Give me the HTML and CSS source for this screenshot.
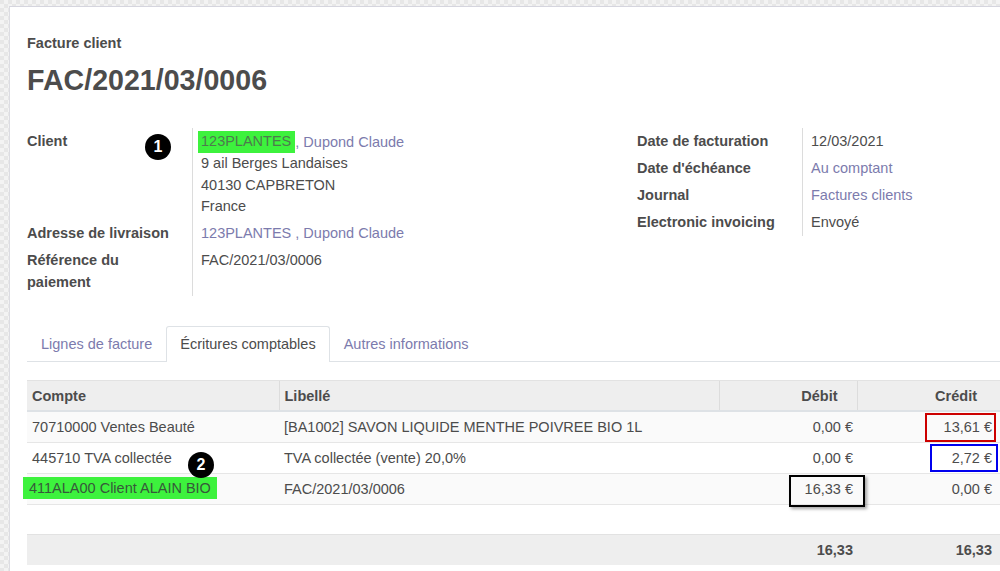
FILE: index.html
```html
<!DOCTYPE html>
<html lang="fr">
<head>
<meta charset="utf-8">
<title>FAC/2021/03/0006</title>
<link rel="stylesheet" href="styles.css">
</head>
<body>
<div class="sheet">
  <div class="subtitle">Facture client</div>
  <h1 class="title">FAC/2021/03/0006</h1>

  <div class="groups">
    <div class="group group-left">
      <div class="label label-badge">Client<span class="badge badge-1">1</span></div>
      <div class="value">
        <div><span class="hl hl-client">123PLANTES&nbsp;</span><span class="link">, Dupond Claude</span></div>
        <div>9 ail Berges Landaises</div>
        <div>40130 CAPBRETON</div>
        <div>France</div>
      </div>
      <div class="label">Adresse de livraison</div>
      <div class="value"><span class="link">123PLANTES , Dupond Claude</span></div>
      <div class="label">Référence du paiement</div>
      <div class="value">FAC/2021/03/0006</div>
    </div>
    <div class="group group-right">
      <div class="label">Date de facturation</div>
      <div class="value">12/03/2021</div>
      <div class="label">Date d'échéance</div>
      <div class="value"><span class="link">Au comptant</span></div>
      <div class="label">Journal</div>
      <div class="value"><span class="link">Factures clients</span></div>
      <div class="label">Electronic invoicing</div>
      <div class="value">Envoyé</div>
    </div>
  </div>

  <div class="tabs">
    <div class="tab">Lignes de facture</div>
    <div class="tab tab-active">Écritures comptables</div>
    <div class="tab">Autres informations</div>
  </div>

  <table class="lines">
    <colgroup>
      <col class="c-account">
      <col class="c-label">
      <col class="c-num">
      <col>
    </colgroup>
    <thead>
      <tr>
        <th>Compte</th>
        <th>Libellé</th>
        <th class="num">Débit</th>
        <th class="num">Crédit</th>
      </tr>
    </thead>
    <tbody>
      <tr class="odd">
        <td>70710000 Ventes Beauté</td>
        <td>[BA1002] SAVON LIQUIDE MENTHE POIVREE BIO 1L</td>
        <td class="num">0,00 €</td>
        <td class="num mark-cell">13,61 €<span class="mark mark-red"></span></td>
      </tr>
      <tr>
        <td class="mark-cell">445710 TVA collectée<span class="badge badge-2">2</span></td>
        <td>TVA collectée (vente) 20,0%</td>
        <td class="num">0,00 €</td>
        <td class="num mark-cell">2,72 €<span class="mark mark-blue"></span></td>
      </tr>
      <tr class="odd">
        <td><span class="hl hl-account">411ALA00 Client ALAIN BIO</span></td>
        <td>FAC/2021/03/0006</td>
        <td class="num mark-cell">16,33 €<span class="mark mark-black"></span></td>
        <td class="num">0,00 €</td>
      </tr>
      <tr class="spacer"><td colspan="4"></td></tr>
    </tbody>
    <tfoot>
      <tr>
        <td></td>
        <td></td>
        <td class="num">16,33</td>
        <td class="num">16,33</td>
      </tr>
    </tfoot>
  </table>
</div>
</body>
</html>
```

FILE: styles.css
```css
html, body {
  margin: 0;
  padding: 0;
  height: 100%;
}

body {
  overflow: hidden;
  background-color: #ececec;
  background-image: repeating-conic-gradient(#f3f3f3 0 25%, #e7e7e7 0 50%);
  background-size: 8px 8px;
  font-family: "Liberation Sans", Arial, sans-serif;
  font-size: 14.5px;
  color: #4c4c4c;
}

.sheet {
  margin: 6px 0 0 9px;
  min-height: 600px;
  background: #ffffff;
  border-top: 1px solid #d5d5de;
  border-left: 1px solid #dcdce2;
  padding: 26px 0 0 17px;
}

.subtitle {
  font-size: 14.5px;
  font-weight: bold;
  line-height: 20px;
}

.title {
  margin: 10px 0 0 0;
  font-size: 28.6px;
  line-height: 34px;
  font-weight: bold;
}

.groups {
  display: flex;
  margin-top: 31px;
}

.group {
  display: grid;
  grid-template-columns: 165px auto;
  align-content: start;
  line-height: 21.5px;
}

.group-left {
  flex: 0 0 610px;
  grid-template-columns: 165px 1fr;
}

.group-right {
  flex: 0 0 auto;
}

.label {
  font-weight: bold;
  padding: 2.75px 16px 2.75px 0;
}

.label-badge {
  position: relative;
}

.value {
  border-left: 1px solid #dcdcdc;
  padding: 2.75px 12px 2.75px 8px;
}

.link {
  color: #7c7bad;
}

.hl {
  background: #3df23d;
}

.hl-client {
  display: inline-block;
  margin-left: -3px;
  padding: 0.5px 0 0.5px 3px;
  color: #4e7a4e;
}

.hl-account {
  display: inline-block;
  line-height: 22px;
  margin-left: -9px;
  padding: 0 6px;
  margin-top: -2px;
  color: #37583a;
}

.badge {
  position: absolute;
  width: 26px;
  height: 26px;
  border-radius: 50%;
  background: #000000;
  color: #ffffff;
  font-size: 16px;
  font-weight: bold;
  line-height: 26px;
  text-align: center;
}

.badge-1 {
  left: 118px;
  top: 6px;
}

.badge-2 {
  left: 161px;
  top: 9px;
}

.tabs {
  display: flex;
  margin-top: 30px;
  border-bottom: 1px solid #dee2e6;
}

.tab {
  padding: 7px 13px 6px 13px;
  line-height: 21px;
  color: #7c7bad;
  border: 1px solid transparent;
  border-bottom: none;
  border-radius: 3px 3px 0 0;
}

.tab-active {
  color: #4c4c4c;
  background: #ffffff;
  border-color: #dee2e6;
  margin-bottom: -1px;
  padding-bottom: 7px;
}

.lines {
  margin-top: 18px;
  width: 100%;
  border-collapse: collapse;
  table-layout: fixed;
}

.c-account { width: 252px; }
.c-label { width: 440px; }
.c-num { width: 138px; }

.lines th {
  background: #eeeeee;
  border-top: 1px solid #e2e2e2;
  border-bottom: 2px solid #dee2e6;
  border-left: 1px solid #dcdcdc;
  height: 29px;
  padding: 0 4px 0 5px;
  text-align: left;
  font-weight: bold;
}

.lines th:first-child {
  border-left: none;
}

.lines th.num {
  padding-right: 19px;
  text-align: right;
}

.lines th.num:last-child {
  padding-right: 23px;
}

.lines td {
  height: 30px;
  padding: 0 4px 0 5px;
  border-bottom: 1px solid #e6e6e6;
  white-space: nowrap;
}

.lines td.num:last-child {
  padding-right: 8px;
}

.lines tbody tr.odd td {
  background: #fafafa;
}

.lines td.num {
  text-align: right;
}

.lines tr.spacer td {
  height: 29px;
  border-bottom: none;
  background: #ffffff;
}

.lines tfoot td {
  height: 30px;
  background: #eeeeee;
  border-top: 1px solid #e2e2e2;
  border-bottom: none;
  font-weight: bold;
}

.mark-cell {
  position: relative;
}

.mark {
  position: absolute;
  box-sizing: border-box;
  border: 2px solid;
}

.mark-red {
  border-color: #cc0000;
  right: 4px;
  top: 1px;
  width: 71px;
  height: 29px;
}

.mark-blue {
  border-color: #0000ee;
  right: 2px;
  top: 1px;
  width: 68px;
  height: 28px;
}

.mark-black {
  border-color: #000000;
  right: -8px;
  top: 1px;
  width: 76px;
  height: 32px;
  box-shadow: 2px 2px 3px rgba(0, 0, 0, 0.35);
}
```
